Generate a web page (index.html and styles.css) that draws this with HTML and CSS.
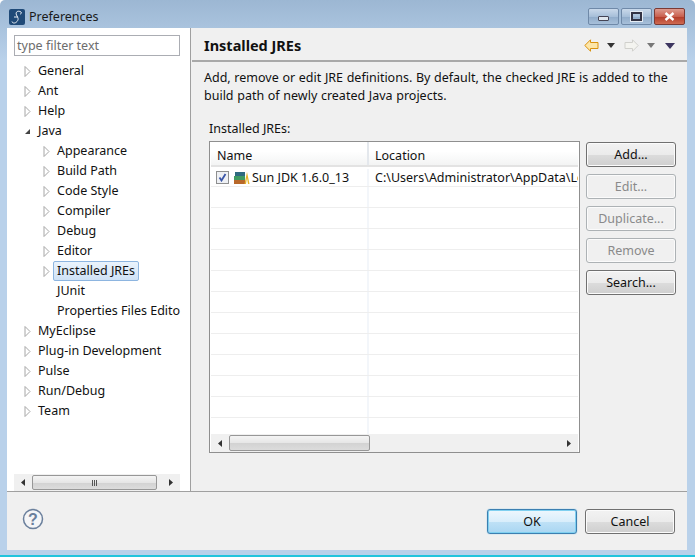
FILE: index.html
```html
<!DOCTYPE html>
<html lang="en">
<head>
<meta charset="utf-8">
<title>Preferences</title>
<link rel="stylesheet" href="styles.css">
</head>
<body>
<div class="window">
  <header class="titlebar">
    <svg class="app-icon" width="16" height="16" viewBox="0 0 16 16"><rect width="16" height="16" rx="2" fill="#1f4a78"/><path d="M12 3C9 1 6 3 7.500 6S10 10 8 12.500 3 14 3 12.500M12 3C13 4 12 5 11 5M9 8H5" fill="none" stroke="#e8eef5" stroke-width="1"/></svg>
    <span class="title">Preferences</span>
    <div class="controls">
      <div class="ctl"><i class="glyph-min"></i></div>
      <div class="ctl"><i class="glyph-max"></i></div>
      <div class="ctl ctl-close"><svg width="11" height="9" viewBox="0 0 11 9"><path d="M1.500 1L9.500 8M9.500 1L1.500 8" stroke="#fff" stroke-width="2.400"/></svg></div>
    </div>
  </header>
  <div class="client">
    <div class="main">
      <aside class="side">
        <div class="filter">type filter text</div>
        <ul class="tree">
          <li><svg class="tw" viewBox="0 0 7 11"><path d="M1 .5L6 5.500 1 10.500Z" fill="#fff" stroke="#a6a6a6"/></svg>General</li>
          <li><svg class="tw" viewBox="0 0 7 11"><path d="M1 .5L6 5.500 1 10.500Z" fill="#fff" stroke="#a6a6a6"/></svg>Ant</li>
          <li><svg class="tw" viewBox="0 0 7 11"><path d="M1 .5L6 5.500 1 10.500Z" fill="#fff" stroke="#a6a6a6"/></svg>Help</li>
          <li><svg class="tw" viewBox="0 0 7 11"><path d="M6 3V8H1Z" fill="#444"/></svg>Java</li>
          <li class="sub"><svg class="tw" viewBox="0 0 7 11"><path d="M1 .5L6 5.500 1 10.500Z" fill="#fff" stroke="#a6a6a6"/></svg>Appearance</li>
          <li class="sub"><svg class="tw" viewBox="0 0 7 11"><path d="M1 .5L6 5.500 1 10.500Z" fill="#fff" stroke="#a6a6a6"/></svg>Build Path</li>
          <li class="sub"><svg class="tw" viewBox="0 0 7 11"><path d="M1 .5L6 5.500 1 10.500Z" fill="#fff" stroke="#a6a6a6"/></svg>Code Style</li>
          <li class="sub"><svg class="tw" viewBox="0 0 7 11"><path d="M1 .5L6 5.500 1 10.500Z" fill="#fff" stroke="#a6a6a6"/></svg>Compiler</li>
          <li class="sub"><svg class="tw" viewBox="0 0 7 11"><path d="M1 .5L6 5.500 1 10.500Z" fill="#fff" stroke="#a6a6a6"/></svg>Debug</li>
          <li class="sub"><svg class="tw" viewBox="0 0 7 11"><path d="M1 .5L6 5.500 1 10.500Z" fill="#fff" stroke="#a6a6a6"/></svg>Editor</li>
          <li class="sub"><svg class="tw" viewBox="0 0 7 11"><path d="M1 .5L6 5.500 1 10.500Z" fill="#fff" stroke="#a6a6a6"/></svg><span class="selected">Installed JREs</span></li>
          <li class="sub leaf">JUnit</li>
          <li class="sub leaf">Properties Files Edito</li>
          <li><svg class="tw" viewBox="0 0 7 11"><path d="M1 .5L6 5.500 1 10.500Z" fill="#fff" stroke="#a6a6a6"/></svg>MyEclipse</li>
          <li><svg class="tw" viewBox="0 0 7 11"><path d="M1 .5L6 5.500 1 10.500Z" fill="#fff" stroke="#a6a6a6"/></svg>Plug-in Development</li>
          <li><svg class="tw" viewBox="0 0 7 11"><path d="M1 .5L6 5.500 1 10.500Z" fill="#fff" stroke="#a6a6a6"/></svg>Pulse</li>
          <li><svg class="tw" viewBox="0 0 7 11"><path d="M1 .5L6 5.500 1 10.500Z" fill="#fff" stroke="#a6a6a6"/></svg>Run/Debug</li>
          <li><svg class="tw" viewBox="0 0 7 11"><path d="M1 .5L6 5.500 1 10.500Z" fill="#fff" stroke="#a6a6a6"/></svg>Team</li>
        </ul>
        <div class="hscroll side-scroll">
          <span class="arr"><svg width="4" height="7" viewBox="0 0 4 7"><path d="M4 0V7L0 3.500Z" fill="#333"/></svg></span>
          <div class="track"><div class="thumb thumb-side"><i></i><i></i><i></i></div></div>
          <span class="arr"><svg width="4" height="7" viewBox="0 0 4 7"><path d="M0 0V7L4 3.500Z" fill="#333"/></svg></span>
        </div>
      </aside>
      <section class="content">
        <div class="page-head">
          <h1>Installed JREs</h1>
          <div class="nav">
            <svg width="15" height="13" viewBox="0 0 15 13"><path d="M.800 6.500L6.500.800V3.500H14V9.500H6.500V12.200Z" fill="#fde6a8" stroke="#d9920f"/></svg>
            <i class="drop d-dark"></i>
            <svg class="nav-fwd" width="15" height="13" viewBox="0 0 15 13"><path d="M14.200 6.500L8.500.800V3.500H1V9.500H8.500V12.200Z" fill="#f4f4f0" stroke="#d0d0cc"/></svg>
            <i class="drop d-grey"></i>
            <i class="drop d-menu"></i>
          </div>
        </div>
        <p class="desc">Add, remove or edit JRE definitions. By default, the checked JRE is added to the build path of newly created Java projects.</p>
        <div class="jre-label">Installed JREs:</div>
        <div class="jre-area">
          <div class="table">
            <div class="thead"><div class="col-a">Name</div><div class="col-b">Location</div></div>
            <div class="tbody">
              <div class="row">
                <div class="col-a">
                  <span class="check"><svg width="9" height="9" viewBox="0 0 9 9"><path d="M1.500 4.500L3.500 7.500 7.500 1" fill="none" stroke="#3a56a8" stroke-width="1.800"/></svg></span>
                  <svg class="jdk" width="16" height="12" viewBox="0 0 16 12"><rect x="1" y="0" width="10" height="4" fill="#2f6a80"/><rect x="0" y="4" width="11" height="4" fill="#3f9a62"/><rect x="0" y="8" width="11" height="4" fill="#b8682a"/><path d="M10.500 12L13 0 15.500 12H14L13 6 12 12Z" fill="#e8b42a"/></svg>
                  Sun JDK 1.6.0_13
                </div>
                <div class="col-b clip">C:\Users\Administrator\AppData\Lo</div>
              </div>
              <div class="row"><div class="col-a"></div><div class="col-b"></div></div>
              <div class="row"><div class="col-a"></div><div class="col-b"></div></div>
              <div class="row"><div class="col-a"></div><div class="col-b"></div></div>
              <div class="row"><div class="col-a"></div><div class="col-b"></div></div>
              <div class="row"><div class="col-a"></div><div class="col-b"></div></div>
              <div class="row"><div class="col-a"></div><div class="col-b"></div></div>
              <div class="row"><div class="col-a"></div><div class="col-b"></div></div>
              <div class="row"><div class="col-a"></div><div class="col-b"></div></div>
              <div class="row"><div class="col-a"></div><div class="col-b"></div></div>
              <div class="row"><div class="col-a"></div><div class="col-b"></div></div>
              <div class="row"><div class="col-a"></div><div class="col-b"></div></div>
              <div class="row"><div class="col-a"></div><div class="col-b"></div></div>
            </div>
            <div class="hscroll table-scroll">
              <span class="arr"><svg width="4" height="7" viewBox="0 0 4 7"><path d="M4 0V7L0 3.500Z" fill="#333"/></svg></span>
              <div class="track"><div class="thumb thumb-table"></div></div>
              <span class="arr"><svg width="4" height="7" viewBox="0 0 4 7"><path d="M0 0V7L4 3.500Z" fill="#333"/></svg></span>
            </div>
          </div>
          <div class="actions">
            <button class="btn">Add...</button>
            <button class="btn off">Edit...</button>
            <button class="btn off">Duplicate...</button>
            <button class="btn off">Remove</button>
            <button class="btn">Search...</button>
          </div>
        </div>
      </section>
    </div>
    <footer class="footer">
      <svg class="help" width="22" height="22" viewBox="0 0 22 22"><circle cx="11" cy="11" r="9.500" fill="#f4f5f7" stroke="#6a7f9c" stroke-width="1.500"/><text x="11" y="16.500" text-anchor="middle" class="help-q">?</text></svg>
      <div class="foot-btns">
        <button class="btn primary">OK</button>
        <button class="btn">Cancel</button>
      </div>
    </footer>
  </div>
</div>
</body>
</html>
```
FILE: styles.css
```css
* { box-sizing: border-box; }
html, body { margin: 0; height: 100%; }
body { width: 696px; height: 557px; overflow: hidden; background: #fff; font-family: "Noto Sans", sans-serif; font-size: 12.5px; color: #111; }
.window { height: 557px; width: 695px; display: flex; flex-direction: column; padding: 0 8px 5px 7px; background: linear-gradient(180deg, #9cb7d3 0, #b9d1ea 60px, #b9d1ea 100%); border-bottom: 2px solid #22c4dc; border-radius: 5px 5px 0 0; }
.titlebar { height: 28px; flex: none; display: flex; align-items: center; position: relative; padding-left: 2px; padding-top: 5px; }
.app-icon { flex: none; }
.title { margin-left: 4px; color: #1a1a1a; }
.controls { margin-left: auto; display: flex; gap: 2px; align-self: flex-start; margin-top: 3px; margin-right: 2px; }
.ctl { width: 31px; height: 17px; border: 1px solid #6f89a8; border-radius: 2px; background: linear-gradient(180deg, #c9d9ea 0, #a7bfd9 50%, #8fabc9 51%, #a8c0da 100%); display: flex; align-items: center; justify-content: center; }
.ctl-close { background: linear-gradient(180deg, #dd9a8e 0, #c9604f 50%, #b23a28 51%, #cf6a52 100%); border-color: #7b3a34; }
.glyph-min { width: 11px; height: 5px; background: #dfe6ee; border: 1px solid #445; margin-top: 3px; border-radius: 1px; }
.glyph-max { width: 11px; height: 9px; background: transparent; border: 2px solid #334; box-shadow: 0 0 0 1px #e4ebf3; }
.client { flex: 1; min-height: 0; display: flex; flex-direction: column; background: #f0f0f0; }
.main { height: 464px; flex: none; display: flex; border-bottom: 1px solid #a0a0a0; }
.side { width: 184px; flex: none; background: #fff; border-right: 1px solid #a0a0a0; padding: 7px 10px 0 7px; display: flex; flex-direction: column; }
.filter { height: 21px; flex: none; border: 1px solid #abadb3; padding-left: 2px; line-height: 20px; color: #6d6d6d; }
.tree { list-style: none; margin: 5px 0 0; padding: 0; flex: 1; }
.tree li { height: 20px; line-height: 20px; display: flex; align-items: center; padding-left: 10px; white-space: nowrap; }
.tree .sub { padding-left: 29px; }
.tree .leaf { padding-left: 43px; }
.tw { width: 7px; height: 11px; flex: none; margin-right: 7px; }
.selected { background: linear-gradient(180deg, #eaf3fc, #cfe2f6); border: 1px solid #8db5e0; border-radius: 2px; padding: 0 3px; height: 20px; line-height: 18px; margin-left: -4px; }
.hscroll { display: flex; align-items: center; background: #f0f0f0; }
.side-scroll { height: 17px; flex: none; }
.arr { width: 18px; flex: none; display: flex; justify-content: center; }
.track { flex: 1; }
.thumb { height: 15px; border: 1px solid #979797; border-radius: 2px; background: linear-gradient(180deg, #f4f4f4, #e6e6e6 50%, #d2d2d2 51%, #dcdcdc); display: flex; align-items: center; justify-content: center; gap: 1px; }
.thumb i { width: 1px; height: 6px; background: #555; }
.thumb-side { width: 125px; }
.content { flex: 1; min-width: 0; }
.page-head { height: 34px; border-bottom: 2px solid #a9a9a9; display: flex; align-items: center; justify-content: space-between; padding: 2px 12px 0 12px; margin-left: 1px; }
h1 { margin: 0; font-size: 14.5px; font-weight: 700; color: #111; }
.nav { display: flex; align-items: center; margin-top: 1px; }
.drop { display: block; width: 0; height: 0; border-left: 4px solid transparent; border-right: 4px solid transparent; border-top: 5px solid #333; margin-left: 8px; }
.d-grey { border-top-color: #777; }
.d-menu { border-left-width: 5px; border-right-width: 5px; border-top: 6px solid #3d3560; margin-left: 10px; }
.nav-fwd { margin-left: 9px; }
.desc { margin: 7px 14px 0 13px; line-height: 18px; word-spacing: 0.4px; }
.jre-label { margin: 14px 0 0 18px; height: 19px; line-height: 19px; }
.jre-area { margin: 3px 0 0 18px; display: flex; gap: 6px; }
.table { width: 371px; height: 312px; flex: none; border: 1px solid #8f8f8f; background: #fff; display: flex; flex-direction: column; overflow: hidden; padding: 0 1px; }
.thead { height: 25px; flex: none; display: flex; border-bottom: 2px solid #e3e3e3; background: linear-gradient(180deg, #fff 0, #fff 40%, #f3f4f4 100%); line-height: 27px; }
.thead .col-b { border-left: 2px solid #e4e8ed; height: 100%; padding-left: 6px; }
.thead .col-a { padding-left: 6px; width: 156px; align-items: flex-start; }
.col-a { width: 158px; flex: none; display: flex; align-items: center; padding-left: 5px; }
.col-b { flex: 1; min-width: 0; padding-left: 6px; white-space: nowrap; }
.clip { overflow: hidden; }
.tbody { flex: 1; min-height: 0; overflow: hidden; }
.row { height: 21px; display: flex; align-items: center; border-bottom: 1px solid #eeeeee; }
.row:first-child { height: 20px; padding-top: 2px; }
.row .col-a { height: 100%; border-right: 2px solid #f3f6fa; }
.check { width: 13px; height: 13px; flex: none; border: 1px solid #8e8f8f; background: #eef0f4; display: flex; align-items: center; justify-content: center; margin-right: 5px; }
.jdk { flex: none; margin-right: 2px; }
.table-scroll { height: 18px; flex: none; }
.thumb-table { width: 141px; height: 16px; }
.actions { display: flex; flex-direction: column; gap: 7px; margin-top: 1px; }
.btn { width: 90px; height: 25px; font-family: inherit; font-size: 12.5px; color: #111; padding: 0; border: 1px solid #707070; border-radius: 3px; background: linear-gradient(180deg, #f2f2f2 0, #ebebeb 50%, #dcdcdc 51%, #cfcfcf 100%); box-shadow: inset 0 0 0 1px #fbfbfb; }
.btn.off { color: #8a8a8a; border-color: #adb2b5; background: #f0f0f0; }
.btn.primary { border-color: #3c7fb1; background: linear-gradient(180deg, #eef7fd 0, #d9eefb 50%, #bfe1f6 51%, #a9d6f2 100%); box-shadow: inset 0 0 0 1px #7fd0f0, 0 0 1px #38a8e0; }
.footer { flex: 1; display: flex; align-items: center; justify-content: space-between; padding: 1px 12px 0 15px; }
.help { flex: none; margin-bottom: 5px; }
.help-q { font-family: "Liberation Sans", sans-serif; font-size: 16px; font-weight: 700; fill: #6a7f9c; }
.foot-btns { display: flex; gap: 8px; }
```
